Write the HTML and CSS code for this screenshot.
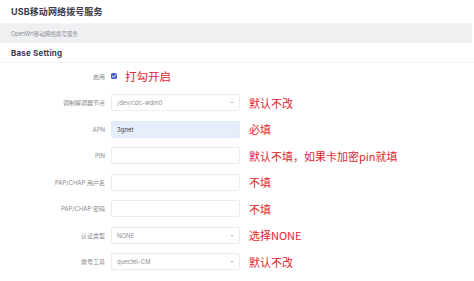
FILE: index.html
```html
<!DOCTYPE html>
<html lang="zh">
<head>
<meta charset="utf-8">
<link rel="stylesheet" href="styles.css">
</head>
<body>
<div class="page">
  <div class="title">USB移动网络拨号服务</div>
  <div class="desc">OpenWrt移动网络拨号服务</div>
  <div class="section">Base Setting</div>
  <div class="form">
    <div class="row">
      <div class="label">启用</div>
      <div class="ctrl ctrl-check">
        <span class="check"><svg viewBox="0 0 10 10" width="6" height="6"><path d="M2.2 5.2 L4.2 7.1 L7.9 3" fill="none" stroke="#fff" stroke-width="1.6" stroke-linecap="round" stroke-linejoin="round"/></svg></span>
        <span class="note note-check">打勾开启</span>
      </div>
    </div>
    <div class="row">
      <div class="label">调制解调器节点</div>
      <div class="ctrl"><div class="field select"><span class="val">/dev/cdc-wdm0</span><span class="arrow"></span></div></div>
      <div class="note">默认不改</div>
    </div>
    <div class="row">
      <div class="label">APN</div>
      <div class="ctrl"><div class="field filled"><span class="val dark">3gnet</span></div></div>
      <div class="note">必填</div>
    </div>
    <div class="row">
      <div class="label">PIN</div>
      <div class="ctrl"><div class="field"></div></div>
      <div class="note">默认不填，如果卡加密pin就填</div>
    </div>
    <div class="row">
      <div class="label">PAP/CHAP 用户名</div>
      <div class="ctrl"><div class="field"></div></div>
      <div class="note">不填</div>
    </div>
    <div class="row">
      <div class="label">PAP/CHAP 密码</div>
      <div class="ctrl"><div class="field"></div></div>
      <div class="note">不填</div>
    </div>
    <div class="row">
      <div class="label">认证类型</div>
      <div class="ctrl"><div class="field select"><span class="val">NONE</span><span class="arrow"></span></div></div>
      <div class="note">选择NONE</div>
    </div>
    <div class="row">
      <div class="label">拨号工具</div>
      <div class="ctrl"><div class="field select"><span class="val">quectel-CM</span><span class="arrow"></span></div></div>
      <div class="note">默认不改</div>
    </div>
  </div>
</div>
</body>
</html>
```
FILE: styles.css
```css
* { box-sizing: border-box; }
html, body { margin: 0; padding: 0; background: #fff; }
body {
  font-family: Inter, "Noto Sans CJK SC", sans-serif;
  width: 474px;
  height: 281px;
  overflow: hidden;
}
.page { width: 474px; }
.title {
  height: 23px;
  padding-left: 11px;
  font-size: 9px;
  font-weight: 700;
  color: #3a3d4a;
  line-height: 23px;
  letter-spacing: 0.1px;
}
.desc {
  height: 20px;
  width: 472px;
  background: #eff0f2;
  padding-left: 11px;
  font-size: 5.5px;
  color: #8a8d96;
  line-height: 20px;
  border-top: 1px solid #f3f4f5;
  border-bottom: 1px solid #f3f4f5;
}
.section {
  height: 20px;
  padding-left: 11px;
  font-size: 8px;
  font-weight: 700;
  color: #3a3d4a;
  line-height: 21px;
  border-bottom: 1px solid #f3f3f5;
  letter-spacing: 0.2px;
}
.form { display: flex; flex-direction: column; }
.row {
  height: 26.5px;
  display: grid;
  grid-template-columns: 105px 135px auto;
  column-gap: 0;
  align-items: center;
}
.label {
  text-align: right;
  font-size: 6px;
  color: #8a8a90;
  white-space: nowrap;
}
.ctrl { margin-left: 6px; display: flex; align-items: center; }
.ctrl-check { grid-column: 2 / 4; }
.check {
  width: 6px;
  height: 6px;
  background: #4d5bc9;
  border-radius: 1.5px;
  display: flex;
  align-items: center;
  justify-content: center;
}
.check svg { display: block; }
.field {
  width: 135px;
  height: 17px;
  border: 1px solid #ebecee;
  border-radius: 2px;
  background: #fff;
  display: flex;
  align-items: center;
  padding-left: 5px;
  padding-right: 6px;
  justify-content: space-between;
}
.field.filled { background: #e7eefb; border-color: #e3e9f6; }
.val { font-size: 6px; color: #8d8f96; }
.val.dark { color: #3a3c44; }
.arrow {
  width: 0; height: 0;
  border-left: 1.3px solid transparent;
  border-right: 1.3px solid transparent;
  border-top: 1.6px solid #555;
}
.note {
  margin-left: 9px;
  font-family: "Noto Sans CJK SC", sans-serif;
  font-size: 11px;
  color: #e3262c;
  white-space: nowrap;
}
.note-check { margin-left: 8px; font-size: 11.5px; }
```
